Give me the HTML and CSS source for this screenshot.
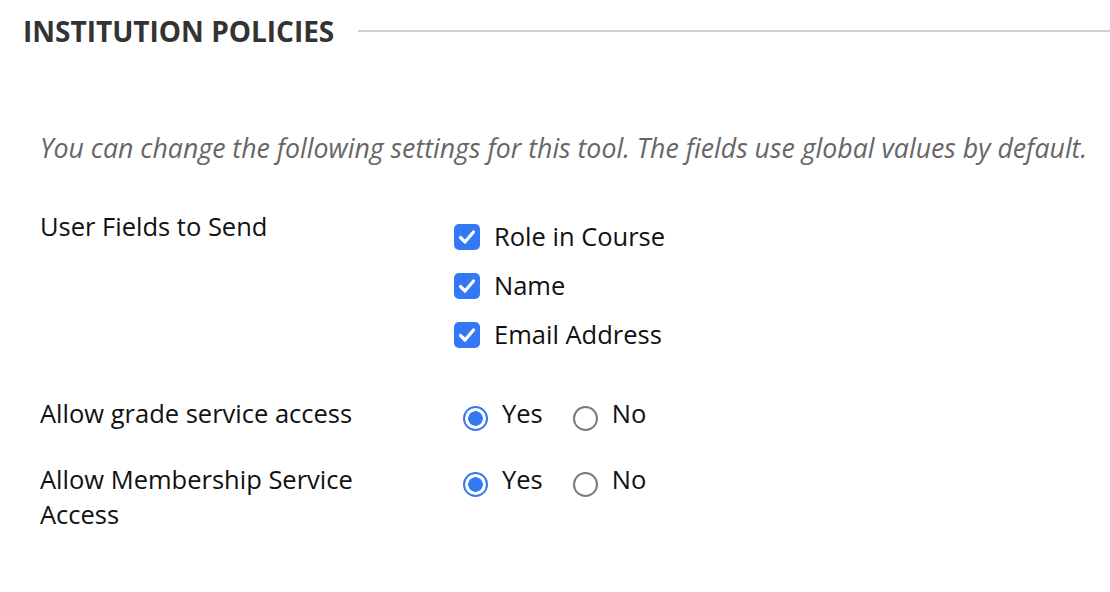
FILE: index.html
```html
<!DOCTYPE html>
<html>
<head>
<meta charset="utf-8">
<link rel="stylesheet" href="styles.css">
</head>
<body>
<div class="page">
  <div class="header">
    <h2 class="title">INSTITUTION POLICIES</h2>
    <div class="rule"></div>
  </div>
  <p class="intro">You can change the following settings for this tool. The fields use global values by default.</p>
  <div class="row row-fields">
    <div class="label">User Fields to Send</div>
    <div class="options col">
      <label class="opt"><span class="check"><svg viewBox="0 0 26 26" width="26" height="26"><path d="M6.5 13.5 L11 18 L19.5 8" fill="none" stroke="#fff" stroke-width="3.2" stroke-linecap="round" stroke-linejoin="round"/></svg></span>Role in Course</label>
      <label class="opt"><span class="check"><svg viewBox="0 0 26 26" width="26" height="26"><path d="M6.5 13.5 L11 18 L19.5 8" fill="none" stroke="#fff" stroke-width="3.2" stroke-linecap="round" stroke-linejoin="round"/></svg></span>Name</label>
      <label class="opt"><span class="check"><svg viewBox="0 0 26 26" width="26" height="26"><path d="M6.5 13.5 L11 18 L19.5 8" fill="none" stroke="#fff" stroke-width="3.2" stroke-linecap="round" stroke-linejoin="round"/></svg></span>Email Address</label>
    </div>
  </div>
  <div class="row row-radio first">
    <div class="label">Allow grade service access</div>
    <div class="options line">
      <label class="ropt"><span class="radio on"></span>Yes</label>
      <label class="ropt"><span class="radio"></span>No</label>
    </div>
  </div>
  <div class="row row-radio second">
    <div class="label">Allow Membership Service<br>Access</div>
    <div class="options line">
      <label class="ropt"><span class="radio on"></span>Yes</label>
      <label class="ropt"><span class="radio"></span>No</label>
    </div>
  </div>
</div>
</body>
</html>
```
FILE: styles.css
```css
html, body {
  margin: 0;
  padding: 0;
  background: #fff;
}
body {
  font-family: "Open Sans", "Noto Sans", sans-serif;
  color: #111;
}
.page {
  padding: 0 0 0 23px;
}
.header {
  display: flex;
  align-items: center;
  height: 62px;
}
.title {
  margin: 0;
  font-size: 28px;
  font-weight: 700;
  color: #333;
  line-height: 1;
}
.rule {
  flex: 1;
  height: 2px;
  background: #d0d0d0;
  margin-left: 24px;
}
.intro {
  margin: 68px 0 0 17px;
  font-style: italic;
  font-size: 26.7px;
  line-height: 36px;
  color: #666;
  white-space: nowrap;
}
.row {
  display: flex;
  padding-left: 17px;
}
.label {
  width: 414px;
  font-size: 25.5px;
  line-height: 35px;
}
.row-fields {
  margin-top: 43px;
}
.col {
  display: flex;
  flex-direction: column;
  gap: 14px;
  padding-top: 10px;
}
.opt {
  display: flex;
  align-items: center;
  font-size: 25.5px;
  line-height: 35px;
  height: 35px;
}
.check {
  width: 26px;
  height: 26px;
  border-radius: 5px;
  background: #3478f6;
  margin-right: 14px;
  display: flex;
}
.row-radio.first {
  margin-top: 44px;
}
.row-radio.second {
  margin-top: 31px;
}
.line {
  display: flex;
  gap: 30px;
  padding-left: 9px;
}
.ropt {
  display: flex;
  align-items: center;
  font-size: 25.5px;
  line-height: 35px;
  height: 35px;
}
.radio {
  box-sizing: border-box;
  width: 25px;
  height: 25px;
  border-radius: 50%;
  border: 2px solid #7a7a7a;
  margin-right: 14px;
  margin-top: 9px;
  background: #fff;
}
.radio.on {
  border: 2.5px solid #3478f6;
  background: radial-gradient(circle, #3478f6 0 7px, #fff 7.5px);
}
```
